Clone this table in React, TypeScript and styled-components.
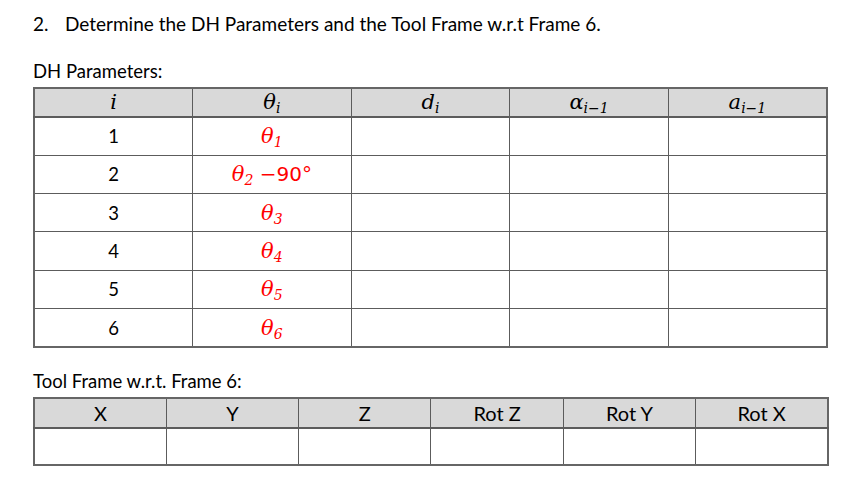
import styled, { createGlobalStyle } from "styled-components";

const GlobalStyle = createGlobalStyle`
  html, body {
    margin: 0;
    padding: 0;
    background: #ffffff;
  }
`;

const dhRows = [
  { i: "1", sub: "1", extra: "" },
  { i: "2", sub: "2", extra: " \u221290\u00b0" },
  { i: "3", sub: "3", extra: "" },
  { i: "4", sub: "4", extra: "" },
  { i: "5", sub: "5", extra: "" },
  { i: "6", sub: "6", extra: "" },
];

const toolCols = ["X", "Y", "Z", "Rot Z", "Rot Y", "Rot X"];

function MathSym({ base, sub }: { base: string; sub?: string }) {
  return (
    <Math>
      {base}
      {sub && <Sub>{sub}</Sub>}
    </Math>
  );
}

export default function App() {
  return (
    <Page>
      <GlobalStyle />
      <Title>
        <Num>2.</Num>
        <span>Determine the DH Parameters and the Tool Frame w.r.t Frame 6.</span>
      </Title>

      <Label top={24}>DH Parameters:</Label>
      <Table width={795}>
        <thead>
          <tr>
            <Head h={26.5}>
              <MathSym base="i" />
            </Head>
            <Head h={26.5}>
              <MathSym base="θ" sub="i" />
            </Head>
            <Head h={26.5}>
              <MathSym base="d" sub="i" />
            </Head>
            <Head h={26.5}>
              <MathSym base="α" sub="i−1" />
            </Head>
            <Head h={26.5}>
              <MathSym base="a" sub="i−1" />
            </Head>
          </tr>
        </thead>
        <tbody>
          {dhRows.map((r) => (
            <tr key={r.i}>
              <Cell h={37.3}>{r.i}</Cell>
              <Cell h={37.3}>
                <Red>
                  <MathSym base="θ" sub={r.sub} />
                  {r.extra && <Upright>{r.extra}</Upright>}
                </Red>
              </Cell>
              <Cell h={37.3} />
              <Cell h={37.3} />
              <Cell h={37.3} />
            </tr>
          ))}
        </tbody>
      </Table>

      <Label top={22}>Tool Frame w.r.t. Frame 6:</Label>
      <Table width={796}>
        <thead>
          <tr>
            {toolCols.map((c) => (
              <Head key={c} h={28} plain>
                {c}
              </Head>
            ))}
          </tr>
        </thead>
        <tbody>
          <tr>
            {toolCols.map((c) => (
              <Cell key={c} h={35} />
            ))}
          </tr>
        </tbody>
      </Table>
    </Page>
  );
}

const Page = styled.div`
  padding: 12px 0 0 33px;
  font-family: Lato, "Open Sans", sans-serif;
  color: #000;
`;

const Title = styled.div`
  display: flex;
  font-size: 19px;
  line-height: 24px;
`;

const Num = styled.span`
  width: 32px;
`;

const Label = styled.div<{ top: number }>`
  margin-top: ${(p) => p.top}px;
  margin-bottom: 5px;
  font-size: 18.5px;
  line-height: 22px;
`;

const Table = styled.table<{ width: number }>`
  width: ${(p) => p.width}px;
  border-collapse: collapse;
  table-layout: fixed;
  border: 2px solid #666;
`;

const Head = styled.th<{ h: number; plain?: boolean }>`
  height: ${(p) => p.h}px;
  padding: 0;
  background: #d9d9d9;
  border: 1px solid #5c5c5c;
  border-bottom-width: 2px;
  font-weight: normal;
  font-size: ${(p) => (p.plain ? 20 : 18)}px;
  text-align: center;
  vertical-align: middle;
`;

const Cell = styled.td<{ h: number }>`
  height: ${(p) => p.h}px;
  padding: 0;
  border: 1px solid #5c5c5c;
  font-size: 18.5px;
  text-align: center;
  vertical-align: middle;
`;

const Math = styled.span`
  font-family: "DejaVu Serif", "Liberation Serif", serif;
  font-style: italic;
  font-size: 21px;
`;

const Sub = styled.sub`
  font-size: 14px;
  vertical-align: -4px;
  line-height: 0;
`;

const Red = styled.span`
  color: #ff0000;
`;

const Upright = styled.span`
  font-family: "DejaVu Sans", sans-serif;
  font-size: 20px;
  white-space: pre;
`;
